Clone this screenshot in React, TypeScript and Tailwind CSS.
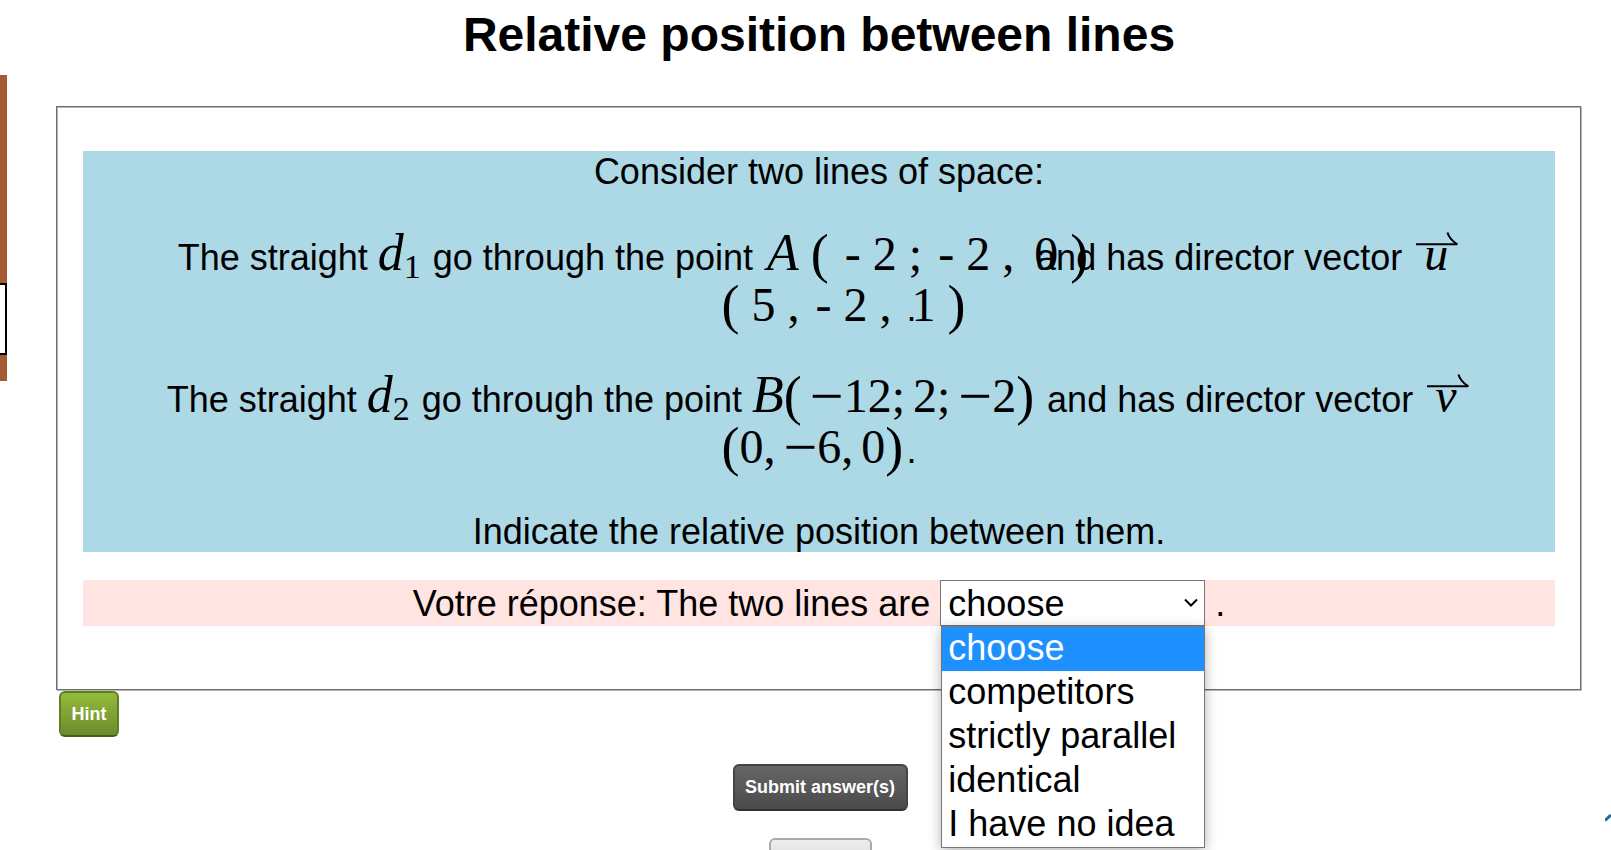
import React, { useState } from 'react';

const choices = [
  'choose',
  'competitors',
  'strictly parallel',
  'identical',
  'I have no idea',
];

const Var = ({ children }: { children: string }) => (
  <i className="text-[52px]">{children}</i>
);

const Paren = ({ children }: { children: string }) => (
  <span className="relative top-0.5 text-[54px]">{children}</span>
);

const Minus = () => (
  <span className="relative top-1 text-[60px]">−</span>
);

// punctuation is followed by a thin space
const Sep = ({ children }: { children: string }) => (
  <span className="mr-2">{children}</span>
);

const NarrowSep = ({ children }: { children: string }) => (
  <span className="mr-1">{children}</span>
);

function Formula({
  className,
  children,
}: {
  className: string;
  children: React.ReactNode;
}) {
  return (
    <span
      className={`inline-block text-left whitespace-nowrap font-['Liberation_Serif',serif] text-[48px] leading-[0px] ${className}`}
    >
      {children}
    </span>
  );
}

function Line({ index }: { index: string }) {
  return (
    <Formula className="w-[45px]">
      <Var>d</Var>
      <span className="relative top-2 text-[34px]">{index}</span>
    </Formula>
  );
}

function Vector({ name }: { name: string }) {
  return (
    <Formula className="relative w-[48px] pl-3">
      <i>{name}</i>
      <svg
        className="absolute left-1 bottom-2 w-[43px] h-[14px]"
        viewBox="0 0 43 14"
        fill="none"
        stroke="black"
        aria-hidden="true"
      >
        <path d="M0 12.3H41" strokeWidth="2" />
        <path d="M31.5 0.5C32.5 4.5 36 9 41.5 12.5" strokeWidth="2" />
      </svg>
    </Formula>
  );
}

function App() {
  const [answer, setAnswer] = useState('choose');
  const [open, setOpen] = useState(true);

  const pick = (choice: string) => {
    setAnswer(choice);
    setOpen(false);
  };

  return (
    <div className="relative flex h-screen overflow-hidden bg-white text-black font-['Liberation_Sans',Arial,sans-serif]">
      <aside className="shrink-0 w-[7px] h-[306px] mt-[75px] pt-[208px] bg-[#a55a33]">
        <div className="h-[72px] bg-white border-2 border-l-0 border-black" />
      </aside>

      <main className="flex-1 ml-[49px] mr-[29px] pt-2">
        <h1 className="text-center text-[48px] leading-[54px] font-bold">
          Relative position between lines
        </h1>

        <section className="mt-11 mr-px mb-px border border-[#6c6c6c] shadow-[1px_1px_0_#b8b8b8,inset_1px_1px_0_#b8b8b8] pl-[26px] pr-[25px] pt-11 pb-[63px] text-center text-[36px]">
          <div className="bg-[#add8e6]">
            <p className="leading-[41px]">Consider two lines of space:</p>

            <p className="mt-10 leading-[51px]">
              The straight <Line index="1" /> go through the point{' '}
              <Formula className="w-[263px] pl-1">
                <Var>A</Var> <Paren>(</Paren> <span className="ml-1">-</span> 2{' '}
                <NarrowSep>;</NarrowSep> - 2 <Sep>,</Sep> 0 <Paren>)</Paren>
              </Formula>{' '}
              and has director vector <Vector name="u" />
              <br />
              <Formula className="w-[185px]">
                <Paren>(</Paren> 5 <NarrowSep>,</NarrowSep> - 2 <Sep>,</Sep> 1{' '}
                <Paren>)</Paren>
              </Formula>
              .
            </p>

            <p className="mt-10 leading-[51px]">
              The straight <Line index="2" /> go through the point{' '}
              <Formula className="w-[285px]">
                <Var>B</Var>
                <Paren>(</Paren>
                <span className="ml-2">
                  <Minus />
                </span>
                12<Sep>;</Sep>2<Sep>;</Sep>
                <Minus />2<Paren>)</Paren>
              </Formula>{' '}
              and has director vector <Vector name="v" />
              <br />
              <Formula className="w-[185px]">
                <Paren>(</Paren>0<Sep>,</Sep>
                <Minus />6<Sep>,</Sep>0<Paren>)</Paren>
              </Formula>
              .
            </p>

            <p className="mt-[35px] leading-[41px]">
              Indicate the relative position between them.
            </p>
          </div>

          <div className="mt-7 h-[46px] flex justify-center gap-2.5 bg-[#ffe4e1] leading-[48px]">
            <label htmlFor="answer">Votre réponse: The two lines are</label>
            <div className="relative w-[265px] text-left">
              <select
                id="answer"
                className="block w-full h-[46px] appearance-none border border-[#767676] bg-white pl-[7px] pr-8 leading-[41px] outline-none"
                value={answer}
                onMouseDown={(e) => {
                  e.preventDefault();
                  setOpen(!open);
                }}
                onChange={({ target }) => setAnswer(target.value)}
              >
                {choices.map((choice) => (
                  <option key={choice}>{choice}</option>
                ))}
              </select>
              <svg
                className="absolute right-1.5 top-[18px] w-[15px] h-[10px] pointer-events-none"
                viewBox="0 0 15 10"
                fill="none"
                stroke="black"
                strokeWidth="2"
                aria-hidden="true"
              >
                <path d="M1 1.5L7 7.5L13 1.5" />
              </svg>
              {open && (
                <ul
                  role="listbox"
                  className="absolute left-px right-0 top-full z-10 border border-[#767676] bg-white leading-[42px] shadow-[0_3px_12px_rgba(0,0,0,0.3)]"
                >
                  {choices.map((choice) => (
                    <li
                      key={choice}
                      role="option"
                      aria-selected={choice === answer}
                      onClick={() => pick(choice)}
                      className={`pl-1.5 pb-0.5 whitespace-nowrap cursor-default ${
                        choice === answer ? 'bg-[#1e90ff] text-white' : ''
                      }`}
                    >
                      {choice}
                    </li>
                  ))}
                </ul>
              )}
            </div>
            <span>.</span>
          </div>
        </section>

        <button
          type="button"
          className="block ml-[3px] w-[60px] h-[46px] rounded-md border-2 border-[#5f7f22] border-b-[#485c18] bg-linear-to-b from-[#94bb3b] to-[#6c8b2a] text-[18px] font-bold text-white"
        >
          Hint
        </button>

        <div className="mt-[27px] pl-0.5 flex flex-col items-center gap-[27px]">
          <button
            type="submit"
            className="w-[175px] h-[47px] rounded-md border-2 border-[#444444] border-b-[#303030] bg-linear-to-b from-[#666666] to-[#4b4b4b] text-[18px] font-bold text-white whitespace-nowrap"
          >
            Submit answer(s)
          </button>
          <button
            type="button"
            aria-label="Next"
            className="w-[103px] h-[47px] rounded-md border-2 border-[#aaaaaa] bg-linear-to-b from-[#eeeeee] to-[#cccccc]"
          />
        </div>
      </main>

      <svg
        className="absolute right-0 bottom-7 w-[6px] h-[8px]"
        viewBox="0 0 6 8"
        fill="none"
        stroke="#1c6ea4"
        strokeWidth="3"
        aria-hidden="true"
      >
        <path d="M0 6.5L6 1" />
      </svg>
    </div>
  );
}

export default App;
